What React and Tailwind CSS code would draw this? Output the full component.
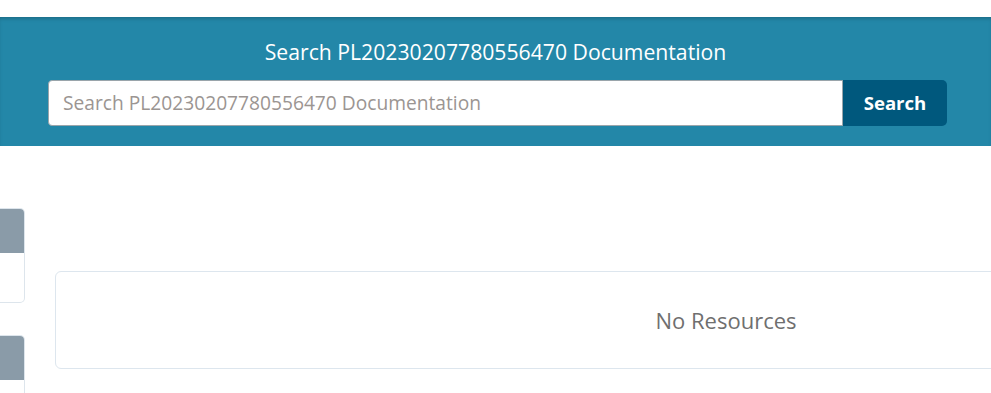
export default function App() {
  return (
    <div className="w-[991px] h-[393px] overflow-hidden bg-white" style={{ fontFamily: '"Open Sans", "Noto Sans", sans-serif' }}>
      <div className="h-[17px] bg-white" />
      <div className="h-[129px] bg-[#2387a8] shadow-[inset_0_3px_4px_-2px_rgba(0,0,0,0.25)] flex flex-col items-center">
        <div className="mt-[20px] h-[30px] text-[21.2px] leading-[30px] text-white">Search PL20230207780556470 Documentation</div>
        <div className="mt-[13px] flex w-[899px] h-[46px] ml-[4px]">
          <div className="flex-1 bg-white border border-[#9aa5ab] rounded-l-[4px] flex items-center pl-[14px] text-[19.2px] text-[#9b9592]">
            Search PL20230207780556470 Documentation
          </div>
          <div className="w-[104px] bg-[#00587d] rounded-r-[5px] flex items-center justify-center text-white font-bold text-[18.6px]">
            Search
          </div>
        </div>
      </div>
      <div className="flex">
        <div className="w-[25px] shrink-0 pt-[62px] flex flex-col gap-[32px]">
          <div className="h-[95px] rounded-r-[5px] border border-l-0 border-[#dde5ec] overflow-hidden">
            <div className="h-[44px] bg-[#8a9ba8]" />
          </div>
          <div className="h-[95px] rounded-r-[5px] border border-l-0 border-[#dde5ec] overflow-hidden">
            <div className="h-[44px] bg-[#8a9ba8]" />
          </div>
        </div>
        <div className="ml-[30px] pt-[125px]">
          <div className="w-[1342px] h-[98px] rounded-[6px] border border-[#dde6ee] flex items-center justify-center text-[22px] text-[#6f6f6f]">
            No Resources
          </div>
        </div>
      </div>
    </div>
  );
}
